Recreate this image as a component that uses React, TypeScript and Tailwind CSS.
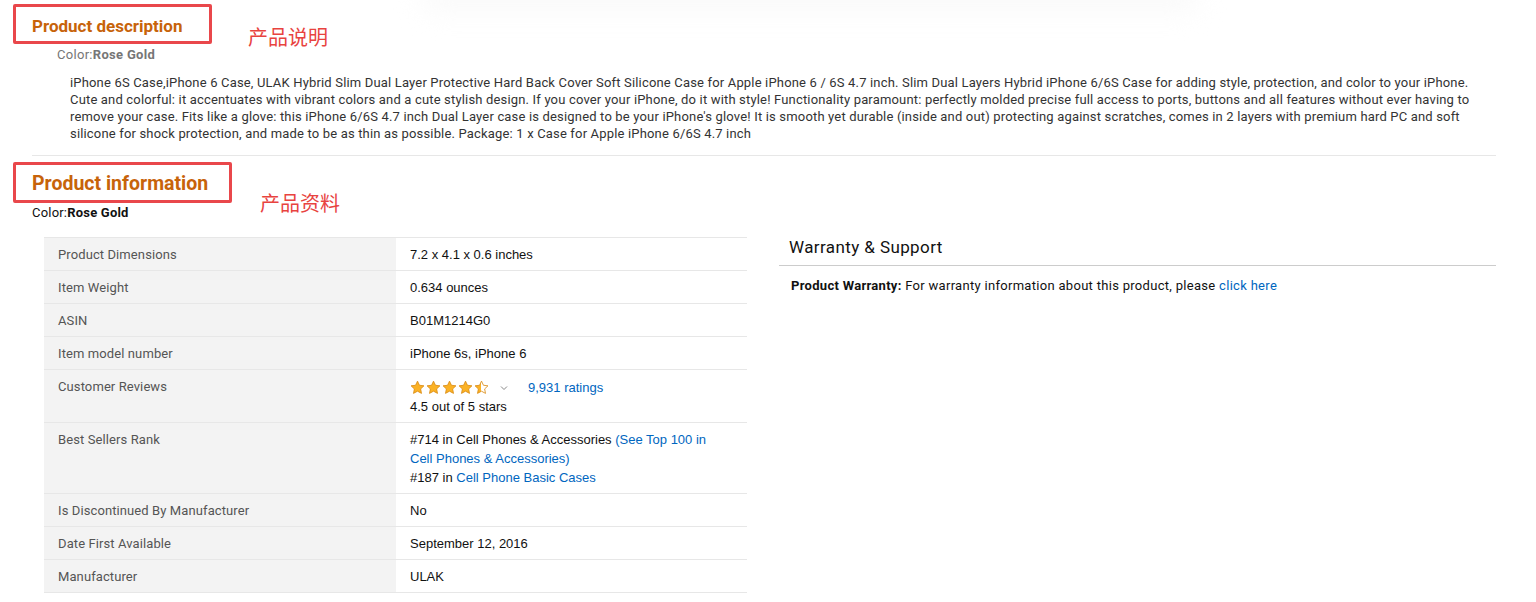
import React from 'react'

// Product detail page fragment: description + information tables with red annotation boxes

const EMBER = "font-['Roboto','Noto_Sans',sans-serif]"
const ARIAL = "font-['Liberation_Sans',Arial,sans-serif]"

type Row = { label: string; value: React.ReactNode }

function Star({ fill }: { fill: 'full' | 'half' }) {
  return (
    <svg width="15" height="15" viewBox="0 0 24 24" className="block">
      <defs>
        <linearGradient id="halfStar" x1="0" x2="1" y1="0" y2="0">
          <stop offset="50%" stopColor="#fbb225" />
          <stop offset="50%" stopColor="#ffffff" />
        </linearGradient>
      </defs>
      <path
        d="M12 1.8l3.1 6.6 7.2.9-5.3 5 1.4 7.1L12 17.9l-6.4 3.5 1.4-7.1-5.3-5 7.2-.9z"
        fill={fill === 'full' ? '#fbb225' : 'url(#halfStar)'}
        stroke="#d98a12"
        strokeWidth="1.3"
        strokeLinejoin="round"
      />
    </svg>
  )
}

function Link({ children }: { children: React.ReactNode }) {
  return <span className="text-[#0066c0]">{children}</span>
}

const descriptionLines = [
  'iPhone 6S Case,iPhone 6 Case, ULAK Hybrid Slim Dual Layer Protective Hard Back Cover Soft Silicone Case for Apple iPhone 6 / 6S 4.7 inch. Slim Dual Layers Hybrid iPhone 6/6S Case for adding style, protection, and color to your iPhone.',
  'Cute and colorful: it accentuates with vibrant colors and a cute stylish design. If you cover your iPhone, do it with style! Functionality paramount: perfectly molded precise full access to ports, buttons and all features without ever having to',
  "remove your case. Fits like a glove: this iPhone 6/6S 4.7 inch Dual Layer case is designed to be your iPhone's glove! It is smooth yet durable (inside and out) protecting against scratches, comes in 2 layers with premium hard PC and soft",
  'silicone for shock protection, and made to be as thin as possible. Package: 1 x Case for Apple iPhone 6/6S 4.7 inch',
]

const rows: Row[] = [
  { label: 'Product Dimensions', value: '7.2 x 4.1 x 0.6 inches' },
  { label: 'Item Weight', value: '0.634 ounces' },
  { label: 'ASIN', value: 'B01M1214G0' },
  { label: 'Item model number', value: 'iPhone 6s, iPhone 6' },
  {
    label: 'Customer Reviews',
    value: (
      <div>
        <div className="flex items-center h-[20px]">
          <div className="flex gap-[1px]">
            <Star fill="full" />
            <Star fill="full" />
            <Star fill="full" />
            <Star fill="full" />
            <Star fill="half" />
          </div>
          <svg width="8" height="6" viewBox="0 0 8 6" className="ml-[11px] mt-[1px]">
            <path d="M1 1.5l3 3 3-3" fill="none" stroke="#888" strokeWidth="1" />
          </svg>
          <span className="ml-[20px] text-[#0066c0]">9,931 ratings</span>
        </div>
        <div>4.5 out of 5 stars</div>
      </div>
    ),
  },
  {
    label: 'Best Sellers Rank',
    value: (
      <div>
        <div>
          #714 in Cell Phones &amp; Accessories <Link>(See Top 100 in</Link>
        </div>
        <div>
          <Link>Cell Phones &amp; Accessories)</Link>
        </div>
        <div>
          #187 in <Link>Cell Phone Basic Cases</Link>
        </div>
      </div>
    ),
  },
  { label: 'Is Discontinued By Manufacturer', value: 'No' },
  { label: 'Date First Available', value: 'September 12, 2016' },
  { label: 'Manufacturer', value: 'ULAK' },
]

export default function App() {
  return (
    <div className="relative w-[1536px] h-[602px] overflow-hidden bg-white">
      {/* faint shadow left from the section above */}
      <div className="absolute top-[-18px] left-[420px] w-[780px] h-[30px] rounded-full bg-[#fafafa] blur-[12px]" />

      <div className="relative pl-[32px] pr-[40px]">
        <h2 className={`${EMBER} pt-[16px] text-[17px] leading-[21px] font-bold text-[#c7630a]`}>
          Product description
        </h2>
        <p className={`${EMBER} mt-[8px] pl-[25px] text-[13px] leading-[19px] tracking-[0.3px] text-[#767676]`}>
          Color:<span className="font-bold">Rose Gold</span>
        </p>
        <div className={`${EMBER} mt-[10px] pl-[38px] text-[13px] leading-[17px] tracking-[0.17px] text-[#333]`}>
          {descriptionLines.map((l) => (
            <p key={l} className="whitespace-nowrap">
              {l}
            </p>
          ))}
        </div>
        <div className="mt-[13px] h-px w-[1464px] bg-[#e7e7e7]" />

        <h2 className={`${EMBER} mt-[16px] text-[19.5px] leading-[23px] font-bold text-[#c7630a]`}>
          Product information
        </h2>
        <p className={`${EMBER} mt-[8px] text-[13px] leading-[19px] tracking-[0.2px] text-[#111]`}>
          Color:<span className="font-bold">Rose Gold</span>
        </p>

        <div className="mt-[15px] flex gap-[32px]">
          <div className="ml-[12px] w-[703px] border-t border-[#e7e7e7]">
            {rows.map((r) => (
              <div key={r.label} className="flex border-b border-[#e7e7e7] text-[13px] leading-[19px]">
                <div
                  className={`${EMBER} w-[352px] shrink-0 bg-[#f3f3f3] pl-[14px] pt-[7px] pb-[6px] tracking-[0.1px] text-[#555]`}
                >
                  {r.label}
                </div>
                <div className={`${ARIAL} flex-1 pl-[14px] pt-[7px] pb-[6px] text-[#111]`}>{r.value}</div>
              </div>
            ))}
          </div>

          <div className="w-[717px]">
            <h3 className={`${EMBER} pl-[10px] text-[17px] leading-[20px] tracking-[0.4px] text-[#111]`}>
              Warranty &amp; Support
            </h3>
            <div className="mt-[8px] h-px bg-[#cccccc]" />
            <p className={`${EMBER} mt-[10px] pl-[12px] text-[13px] leading-[19px] tracking-[0.3px] text-[#111]`}>
              <span className="font-bold">Product Warranty:</span> For warranty information about this product, please{' '}
              <Link>click here</Link>
            </p>
          </div>
        </div>
      </div>

      {/* red annotation boxes */}
      <div className="absolute left-[13px] top-[4px] w-[199px] h-[40px] rounded-[2px] border-[3px] border-[#e9474b]" />
      <div className="absolute left-[13px] top-[162px] w-[219px] h-[41px] rounded-[2px] border-[3px] border-[#e9474b]" />
      <span className="absolute left-[248px] top-[24px] text-[20px] leading-[26px] text-[#e8433f] font-['Noto_Sans_CJK_SC',sans-serif]">
        产品说明
      </span>
      <span className="absolute left-[260px] top-[190px] text-[20px] leading-[26px] text-[#e8433f] font-['Noto_Sans_CJK_SC',sans-serif]">
        产品资料
      </span>
    </div>
  )
}
